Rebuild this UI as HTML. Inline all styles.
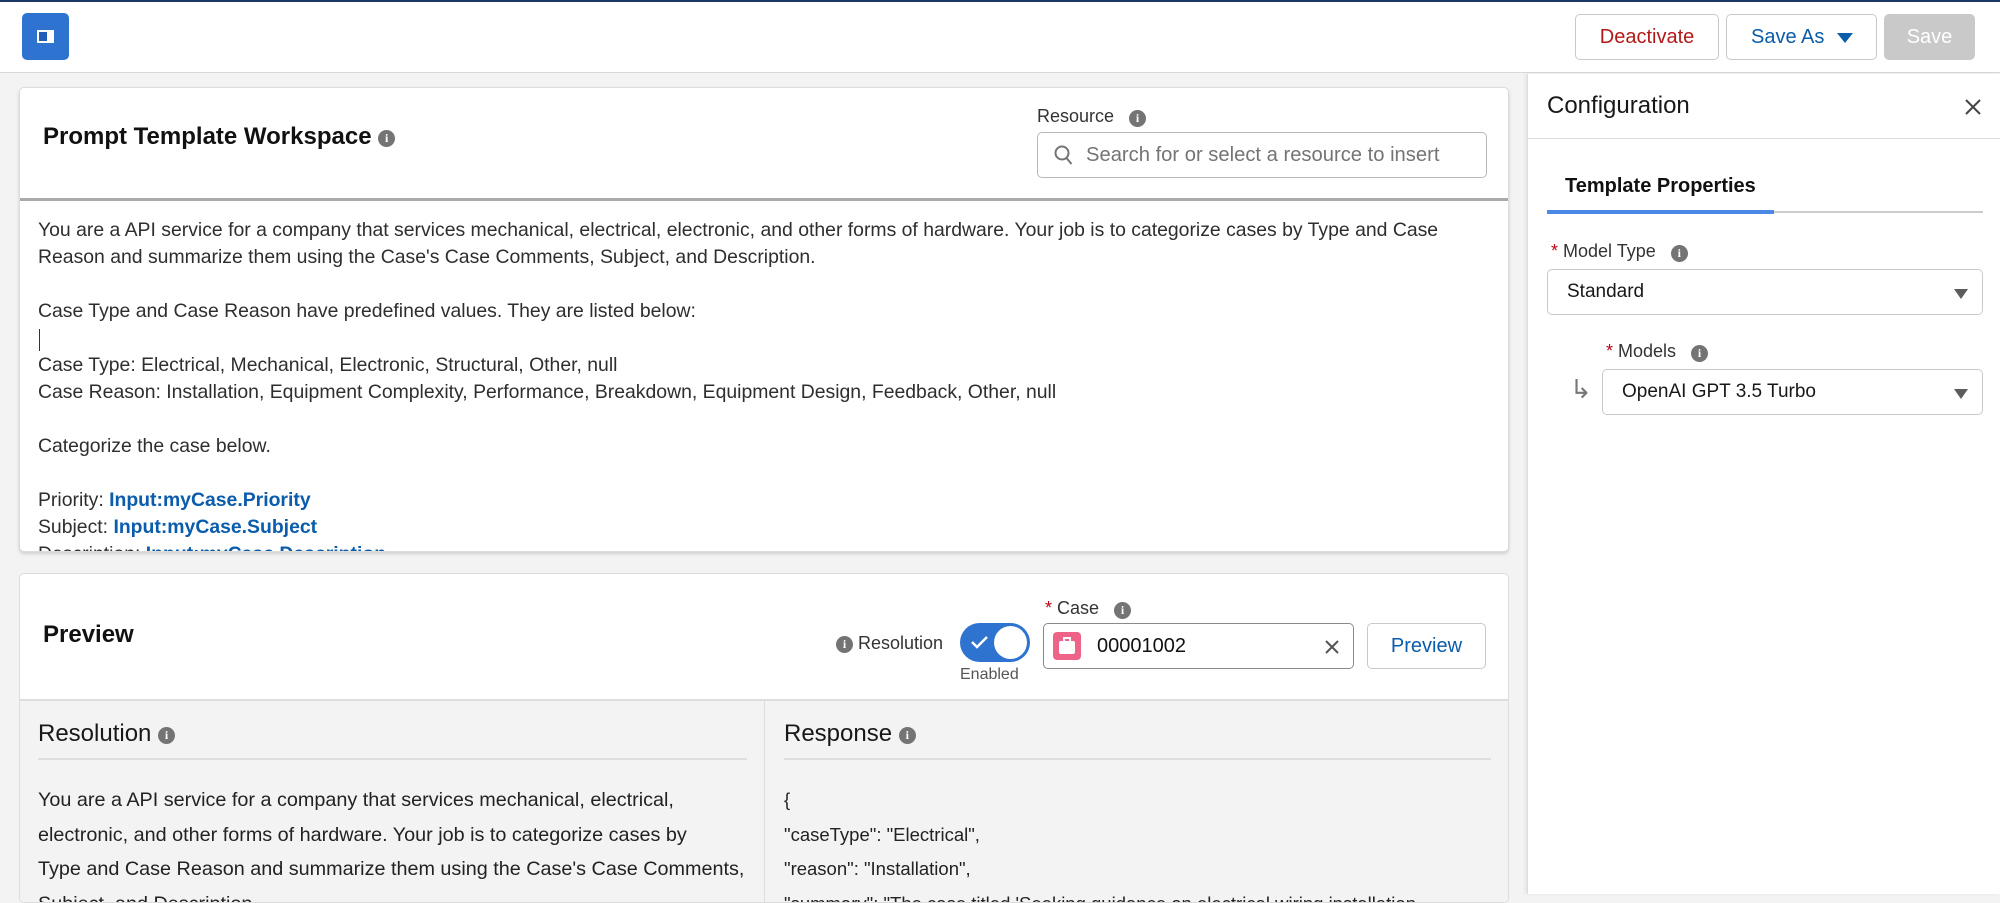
<!DOCTYPE html>
<html><head><meta charset="utf-8"><style>
*{box-sizing:border-box;margin:0;padding:0}
body{width:2000px;height:884px;overflow:hidden;background:#f3f3f3;font-family:"Liberation Sans",sans-serif;color:#181818;position:relative}
.a{position:absolute}
.info{display:inline-block;width:17px;height:17px;border-radius:50%;background:#747474;color:#fff;font-size:12px;font-weight:bold;text-align:center;line-height:17px;font-family:"Liberation Serif",serif}
.btn{position:absolute;top:14px;height:46px;border:1px solid #c9c9c9;border-radius:5px;background:#fff;font-size:20px;text-align:center;line-height:44px}
.req{color:#ba0517}
.line{position:absolute;left:38px;font-size:19.4px;color:#2e2e2e;white-space:nowrap}
.lnk{color:#0b5cab;font-weight:bold}
.sel{position:absolute;border:1px solid #c9c9c9;border-radius:5px;background:#fff;font-size:19px;padding-left:19px}
.tri{position:absolute;right:14px;top:19px;width:0;height:0;border-left:7px solid transparent;border-right:7px solid transparent;border-top:10px solid #5c5c5c}
</style></head><body>
<div class="a" style="left:0;top:0;width:2000px;height:73px;background:#fff;border-bottom:1px solid #d8d8d8"></div>
<div class="a" style="left:0;top:0;width:2000px;height:2px;background:#1b3764"></div>
<div class="a" style="left:22px;top:13px;width:47px;height:47px;background:#2f73d1;border-radius:5px">
 <div class="a" style="left:15px;top:17px;width:17px;height:13px;border:2px solid #fff;background:#1f5fb8"></div>
 <div class="a" style="left:25px;top:19px;width:5px;height:9px;background:#fff"></div>
</div>
<div class="btn" style="left:1575px;width:144px;color:#b21a1a">Deactivate</div>
<div class="btn" style="left:1726px;width:151px;color:#0b5cab;text-align:left;padding-left:24px">Save As<span class="a" style="left:110px;top:18px;border-left:8px solid transparent;border-right:8px solid transparent;border-top:10px solid #0b5cab"></span></div>
<div class="btn" style="left:1884px;width:91px;background:#c9c9c9;border-color:#c9c9c9;color:#fff">Save</div>

<!-- card 1 -->
<div class="a" style="left:19px;top:87px;width:1490px;height:465px;background:#fff;border:1px solid #dcdcdc;border-radius:5px;box-shadow:0 2px 3px rgba(0,0,0,.15);overflow:hidden">
 <div class="a" style="left:23px;top:35px;font-size:24px;font-weight:bold;color:#111">Prompt Template Workspace <span class="info" style="vertical-align:2px">i</span></div>
 <div class="a" style="left:1017px;top:18px;font-size:18px;color:#333">Resource <span class="info" style="margin-left:10px">i</span></div>
 <div class="a" style="left:1017px;top:44px;width:450px;height:46px;border:1px solid #b8b8b8;border-radius:5px;font-size:20.2px;color:#747474;line-height:44px;padding-left:48px;white-space:nowrap">
  <svg class="a" style="left:16px;top:12px" width="20" height="22" viewBox="0 0 20 22"><circle cx="8" cy="8" r="6.5" fill="none" stroke="#747474" stroke-width="2"/><path d="M12.5 13l5 6" stroke="#747474" stroke-width="2"/></svg>Search for or select a resource to insert</div>
 <div class="a" style="left:0;top:110px;width:1490px;height:3px;background:#aaa"></div>
 <div class="line" style="top:131px;left:18px">You are a API service for a company that services mechanical, electrical, electronic, and other forms of hardware. Your job is to categorize cases by Type and Case</div>
 <div class="line" style="top:158px;left:18px">Reason and summarize them using the Case's Case Comments, Subject, and Description.</div>
 <div class="line" style="top:212px;left:18px">Case Type and Case Reason have predefined values. They are listed below:</div>
 <div class="a" style="left:19px;top:241px;width:1px;height:22px;background:#333"></div>
 <div class="line" style="top:266px;left:18px">Case Type: Electrical, Mechanical, Electronic, Structural, Other, null</div>
 <div class="line" style="top:293px;left:18px">Case Reason: Installation, Equipment Complexity, Performance, Breakdown, Equipment Design, Feedback, Other, null</div>
 <div class="line" style="top:347px;left:18px">Categorize the case below.</div>
 <div class="line" style="top:401px;left:18px">Priority: <span class="lnk">Input:myCase.Priority</span></div>
 <div class="line" style="top:428px;left:18px">Subject: <span class="lnk">Input:myCase.Subject</span></div>
 <div class="line" style="top:455px;left:18px">Description: <span class="lnk">Input:myCase.Description</span></div>
</div>

<!-- card 2 -->
<div class="a" style="left:19px;top:573px;width:1490px;height:330px;background:#fff;border:1px solid #dcdcdc;border-radius:5px;overflow:hidden">
 <div class="a" style="left:23px;top:47px;font-size:24px;font-weight:bold;color:#111">Preview</div>
 <div class="a" style="left:816px;top:59px;font-size:18px;color:#333"><span class="info" style="vertical-align:1px">i</span> Resolution</div>
 <div class="a" style="left:940px;top:49px;width:70px;height:39px;border-radius:20px;background:#2f73d1">
  <svg class="a" style="left:10px;top:11px" width="20" height="16"><path d="M2 8l5 5 10-10" fill="none" stroke="#fff" stroke-width="2.5"/></svg>
  <div class="a" style="left:34px;top:3px;width:33px;height:33px;border-radius:50%;background:#fff"></div>
 </div>
 <div class="a" style="left:940px;top:92px;font-size:16px;color:#555">Enabled</div>
 <div class="a" style="left:1025px;top:24px;font-size:18px;color:#333"><span class="req">*</span> Case <span class="info" style="margin-left:10px">i</span></div>
 <div class="a" style="left:1023px;top:49px;width:311px;height:46px;border:1px solid #8a8a8a;border-radius:5px;background:#fff">
  <div class="a" style="left:9px;top:8px;width:28px;height:28px;border-radius:4px;background:#ef6388">
   <div class="a" style="left:6px;top:9px;width:16px;height:13px;background:#fff;border-radius:2px"></div>
   <div class="a" style="left:10px;top:5px;width:8px;height:5px;border:2px solid #fff;border-bottom:none"></div>
  </div>
  <div class="a" style="left:53px;top:11px;font-size:20px;color:#111">00001002</div>
  <svg class="a" style="left:280px;top:15px" width="16" height="16"><path d="M2 2l12 12M14 2L2 14" stroke="#555" stroke-width="2"/></svg>
 </div>
 <div class="a" style="left:1347px;top:49px;width:119px;height:46px;border:1px solid #c9c9c9;border-radius:5px;color:#0b5cab;font-size:20px;text-align:center;line-height:44px">Preview</div>
 <div class="a" style="left:0;top:125px;width:1490px;height:210px;background:#f3f3f3;border-top:2px solid #ddd"></div>
 <div class="a" style="left:744px;top:127px;width:1px;height:210px;background:#ddd"></div>
 <div class="a" style="left:18px;top:146px;font-size:24px;color:#181818">Resolution <span class="info" style="vertical-align:2px">i</span></div>
 <div class="a" style="left:18px;top:184px;width:709px;height:2px;background:#ddd"></div>
 <div class="a" style="left:764px;top:146px;font-size:24px;color:#181818">Response <span class="info" style="vertical-align:2px">i</span></div>
 <div class="a" style="left:764px;top:184px;width:707px;height:2px;background:#ddd"></div>
 <div class="a" style="left:18px;top:209px;font-size:19.8px;line-height:34.5px;color:#222;white-space:nowrap">You are a API service for a company that services mechanical, electrical,<br>electronic, and other forms of hardware. Your job is to categorize cases by<br>Type and Case Reason and summarize them using the Case's Case Comments,<br>Subject, and Description.</div>
 <div class="a" style="left:764px;top:209px;font-size:18.5px;line-height:34.5px;color:#222;white-space:nowrap">{<br>"caseType": "Electrical",<br>"reason": "Installation",<br>"summary": "The case titled 'Seeking guidance on electrical wiring installation</div>
</div>

<!-- right panel -->
<div class="a" style="left:1527px;top:74px;width:473px;height:820px;background:#fff;border-left:1px solid #ddd;box-shadow:-2px 0 3px rgba(0,0,0,.06)">
 <div class="a" style="left:19px;top:18px;font-size:24px;color:#181818">Configuration</div>
 <svg class="a" style="left:437px;top:25px" width="16" height="16"><path d="M1 1l14 14M15 1L1 15" stroke="#444" stroke-width="2"/></svg>
 <div class="a" style="left:0;top:64px;width:473px;height:1px;background:#ddd"></div>
 <div class="a" style="left:37px;top:101px;font-size:20px;font-weight:bold;color:#111">Template Properties</div>
 <div class="a" style="left:19px;top:137px;width:436px;height:2px;background:#ccc"></div>
 <div class="a" style="left:19px;top:136px;width:227px;height:4px;background:#4a8ae6"></div>
 <div class="a" style="left:23px;top:167px;font-size:18px;color:#333"><span class="req">*</span> Model Type <span class="info" style="margin-left:10px">i</span></div>
 <div class="sel" style="left:19px;top:195px;width:436px;height:46px;line-height:44px">Standard<span class="tri"></span></div>
 <div class="a" style="left:78px;top:267px;font-size:18px;color:#333"><span class="req">*</span> Models <span class="info" style="margin-left:10px">i</span></div>
 <div class="a" style="left:42px;top:300px;font-size:26px;color:#777">↳</div>
 <div class="sel" style="left:74px;top:295px;width:381px;height:46px;line-height:44px">OpenAI GPT 3.5 Turbo<span class="tri"></span></div>
</div>
</body></html>
